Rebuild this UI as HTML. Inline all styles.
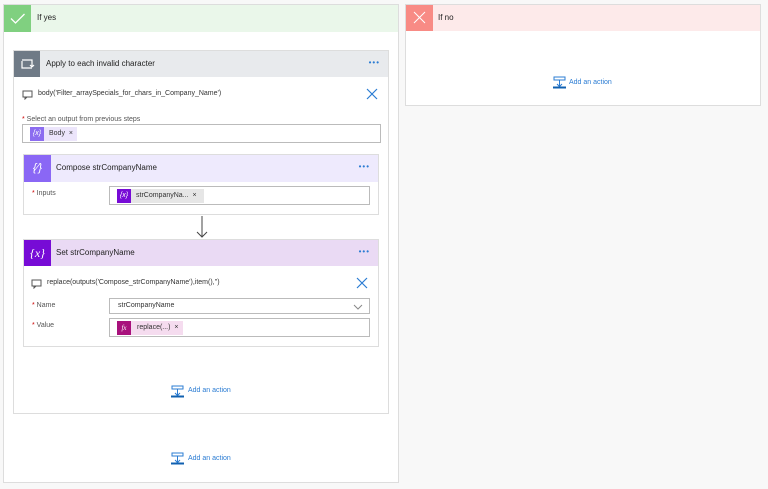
<!DOCTYPE html>
<html><head><style>
*{margin:0;padding:0;box-sizing:border-box}
body{width:768px;height:489px;background:#f8f8f8;font-family:"Segoe UI","Liberation Sans",sans-serif;font-size:8px;color:#333;position:relative;overflow:hidden}
.a{position:absolute}
.box{position:absolute;background:#fff;border:1px solid #ddd}
.hdr{position:absolute;left:0;top:0;right:0;height:27px}
.ic{position:absolute;left:0;top:0;width:27px;height:27px}
.t{position:absolute;left:37px;top:8px;font-size:8px;color:#222}
.dots{position:absolute;right:8px;top:7px;color:#2b7cd3;font-size:8px;letter-spacing:1px}
.inp{position:absolute;border:1px solid #bbb;background:#fff;height:19px}
.tok{position:absolute;top:2px;height:14px;font-size:7px;line-height:14px}
.tk{position:absolute;left:0;top:0;width:14px;height:14px;color:#fff;font-size:7px;text-align:center;line-height:14px;font-style:italic}
.lab{position:absolute;font-size:7px;color:#555}
.lab b{color:#c00;font-weight:normal}
.add{position:absolute;font-size:7px;color:#2b7cd3}
</style></head><body>

<div class="box" style="left:3px;top:4px;width:396px;height:479px">
 <div class="hdr" style="background:#eaf7ea"></div>
 <div class="ic" style="background:#80d080"><svg width="27" height="27"><path d="M7 13.5l4.5 4.5 9-9" stroke="#fff" stroke-width="1.3" fill="none"/></svg></div>
 <div class="t" style="left:33px">If yes</div>
</div>

<div class="box" style="left:13px;top:50px;width:376px;height:364px">
 <div class="hdr" style="background:#e8eaed;height:26px"></div>
 <div class="ic" style="background:#6f7a86;width:26px;height:26px"><svg width="26" height="26"><path d="M8 9h10v7M18 16l-2-2M18 16l2-2M18 17H8v-7" stroke="#fff" stroke-width="1.2" fill="none"/></svg></div>
 <div class="t" style="left:32px">Apply to each invalid character</div>
 <div class="dots">•••</div>
 <svg class="a" style="left:8px;top:39px" width="12" height="10"><rect x="1" y="1" width="9" height="6" stroke="#555" fill="none"/><path d="M3 7v2l2-2" stroke="#555" fill="none"/></svg>
 <div class="a" style="left:24px;top:39px;font-size:7px">body('Filter_arraySpecials_for_chars_in_Company_Name')</div>
 <svg class="a" style="left:352px;top:37px" width="12" height="12"><path d="M1 1l10 10M11 1L1 11" stroke="#2b7cd3" stroke-width="1.2"/></svg>
 <div class="lab" style="left:8px;top:65px"><b>*</b> Select an output from previous steps</div>
 <div class="inp" style="left:8px;top:73px;width:359px">
  <div class="tok" style="left:7px;width:47px;background:#ece5fb"><div class="tk" style="background:#8c6cf0">{x}</div><span style="position:absolute;left:19px">Body <span style="margin-left:2px">×</span></span></div>
 </div>

 <div class="box" style="left:9px;top:103px;width:356px;height:61px">
  <div class="hdr" style="background:#eeeafd"></div>
  <div class="ic" style="background:#8a67f5;color:#fff;font-size:11px;text-align:center;line-height:27px;font-style:italic">{∕}</div>
  <div class="t" style="left:32px">Compose strCompanyName</div>
  <div class="dots">•••</div>
  <div class="lab" style="left:8px;top:35px"><b>*</b> Inputs</div>
  <div class="inp" style="left:85px;top:31px;width:261px">
   <div class="tok" style="left:7px;width:87px;background:#e6e6e6"><div class="tk" style="background:#770bd6">{x}</div><span style="position:absolute;left:19px">strCompanyNa... <span style="margin-left:2px">×</span></span></div>
  </div>
 </div>
 <svg class="a" style="left:182px;top:165px" width="12" height="24"><path d="M6 0v21M1 16l5 5 5-5" stroke="#444" stroke-width="1" fill="none"/></svg>

 <div class="box" style="left:9px;top:188px;width:356px;height:108px">
  <div class="hdr" style="background:#eadaf4;height:26px"></div>
  <div class="ic" style="background:#770bd6;height:26px;color:#fff;font-size:12px;text-align:center;line-height:26px;font-family:'Liberation Serif',serif;font-style:italic">{x}</div>
  <div class="t" style="left:32px">Set strCompanyName</div>
  <div class="dots">•••</div>
  <svg class="a" style="left:7px;top:39px" width="12" height="10"><rect x="1" y="1" width="9" height="6" stroke="#555" fill="none"/><path d="M3 7v2l2-2" stroke="#555" fill="none"/></svg>
  <div class="a" style="left:23px;top:39px;font-size:7px">replace(outputs('Compose_strCompanyName'),item(),'')</div>
  <svg class="a" style="left:332px;top:37px" width="12" height="12"><path d="M1 1l10 10M11 1L1 11" stroke="#2b7cd3" stroke-width="1.2"/></svg>
  <div class="lab" style="left:8px;top:62px"><b>*</b> Name</div>
  <div class="inp" style="left:85px;top:58px;width:261px;height:16px"><span style="position:absolute;left:8px;top:3px;font-size:7px">strCompanyName</span><svg class="a" style="right:6px;top:5px" width="10" height="6"><path d="M1 1l4 4 4-4" stroke="#888" fill="none"/></svg></div>
  <div class="lab" style="left:8px;top:82px"><b>*</b> Value</div>
  <div class="inp" style="left:85px;top:78px;width:261px">
   <div class="tok" style="left:7px;width:66px;background:#f5dcef"><div class="tk" style="background:#a8117c;font-family:'Liberation Serif',serif">fx</div><span style="position:absolute;left:20px">replace(...) <span style="margin-left:2px">×</span></span></div>
  </div>
 </div>
</div>

<svg class="a" style="left:171px;top:385px" width="13" height="13"><path d="M1 1h11v3H1zM6.5 4v6M4 8l2.5 2.5L9 8" stroke="#2b7cd3" fill="none"/><rect x="0" y="10.5" width="13" height="2" fill="#1060b0"/></svg>
<div class="add" style="left:188px;top:387px">Add an action</div>
<svg class="a" style="left:171px;top:452px" width="13" height="13"><path d="M1 1h11v3H1zM6.5 4v6M4 8l2.5 2.5L9 8" stroke="#2b7cd3" fill="none"/><rect x="0" y="10.5" width="13" height="2" fill="#1060b0"/></svg>
<div class="add" style="left:188px;top:455px">Add an action</div>

<div class="box" style="left:405px;top:4px;width:356px;height:102px">
 <div class="hdr" style="background:#fdeaea;height:26px"></div>
 <div class="ic" style="background:#f88b85;height:26px"><svg width="27" height="26"><path d="M8 7l11 11M19 7L8 18" stroke="#fff" stroke-width="1"/></svg></div>
 <div class="t" style="left:32px">If no</div>
</div>
<svg class="a" style="left:553px;top:76px" width="13" height="13"><path d="M1 1h11v3H1zM6.5 4v6M4 8l2.5 2.5L9 8" stroke="#2b7cd3" fill="none"/><rect x="0" y="10.5" width="13" height="2" fill="#1060b0"/></svg>
<div class="add" style="left:569px;top:79px">Add an action</div>
</body></html>
